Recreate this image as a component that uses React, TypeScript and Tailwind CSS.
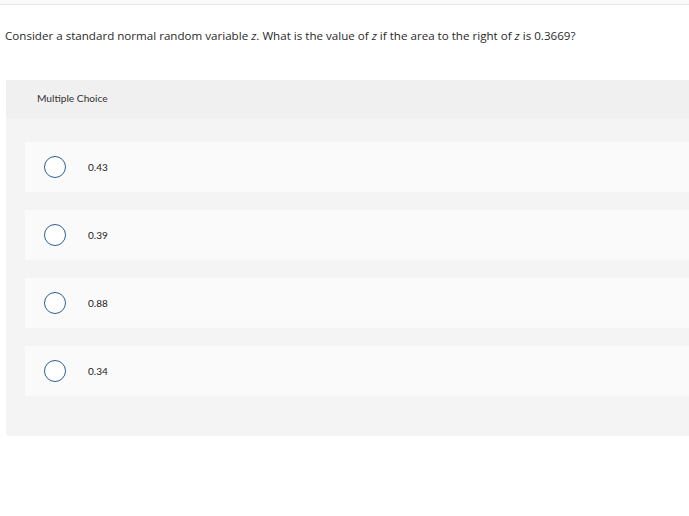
import React from "react";

const options = ["0.43", "0.39", "0.88", "0.34"];

function Radio() {
  return <span className="block w-[22px] h-[22px] rounded-full border-[1.5px] border-[#2e5f93] bg-white shrink-0" />;
}

export default function App() {
  return (
    <div className="w-[689px] h-[516px] bg-white text-[#222] overflow-hidden" style={{ fontFamily: "Lato, 'Open Sans', sans-serif" }}>
      <div className="h-[5px] bg-[#fafafa] border-b border-[#e8e8e8]" />

      {/* Question */}
      <p className="mt-[24px] ml-[5px] text-[11.6px] leading-[14px] text-[#2a2a2a]" style={{ fontFamily: "'Open Sans', sans-serif" }}>
        Consider a standard normal random variable <i>z</i>. What is the value of <i>z</i> if the area to the right of <i>z</i> is 0.3669?
      </p>

      {/* Answer panel */}
      <div className="mt-[37px] ml-[6px] bg-[#f4f4f4] rounded-bl-[3px] pb-[40px]">
        <div className="h-[38px] bg-[#f0f0f0] flex items-center pl-[31px] text-[10.2px] text-[#333]">
          Multiple Choice
        </div>
        <div className="pt-[24px] pl-[19px] flex flex-col gap-[18px]">
          {options.map((opt) => (
            <div key={opt} className="h-[50px] bg-[#fafafa] flex items-center pl-[19px]">
              <Radio />
              <span className="ml-[22px] text-[10px] text-[#222]">{opt}</span>
            </div>
          ))}
        </div>
      </div>
    </div>
  );
}
